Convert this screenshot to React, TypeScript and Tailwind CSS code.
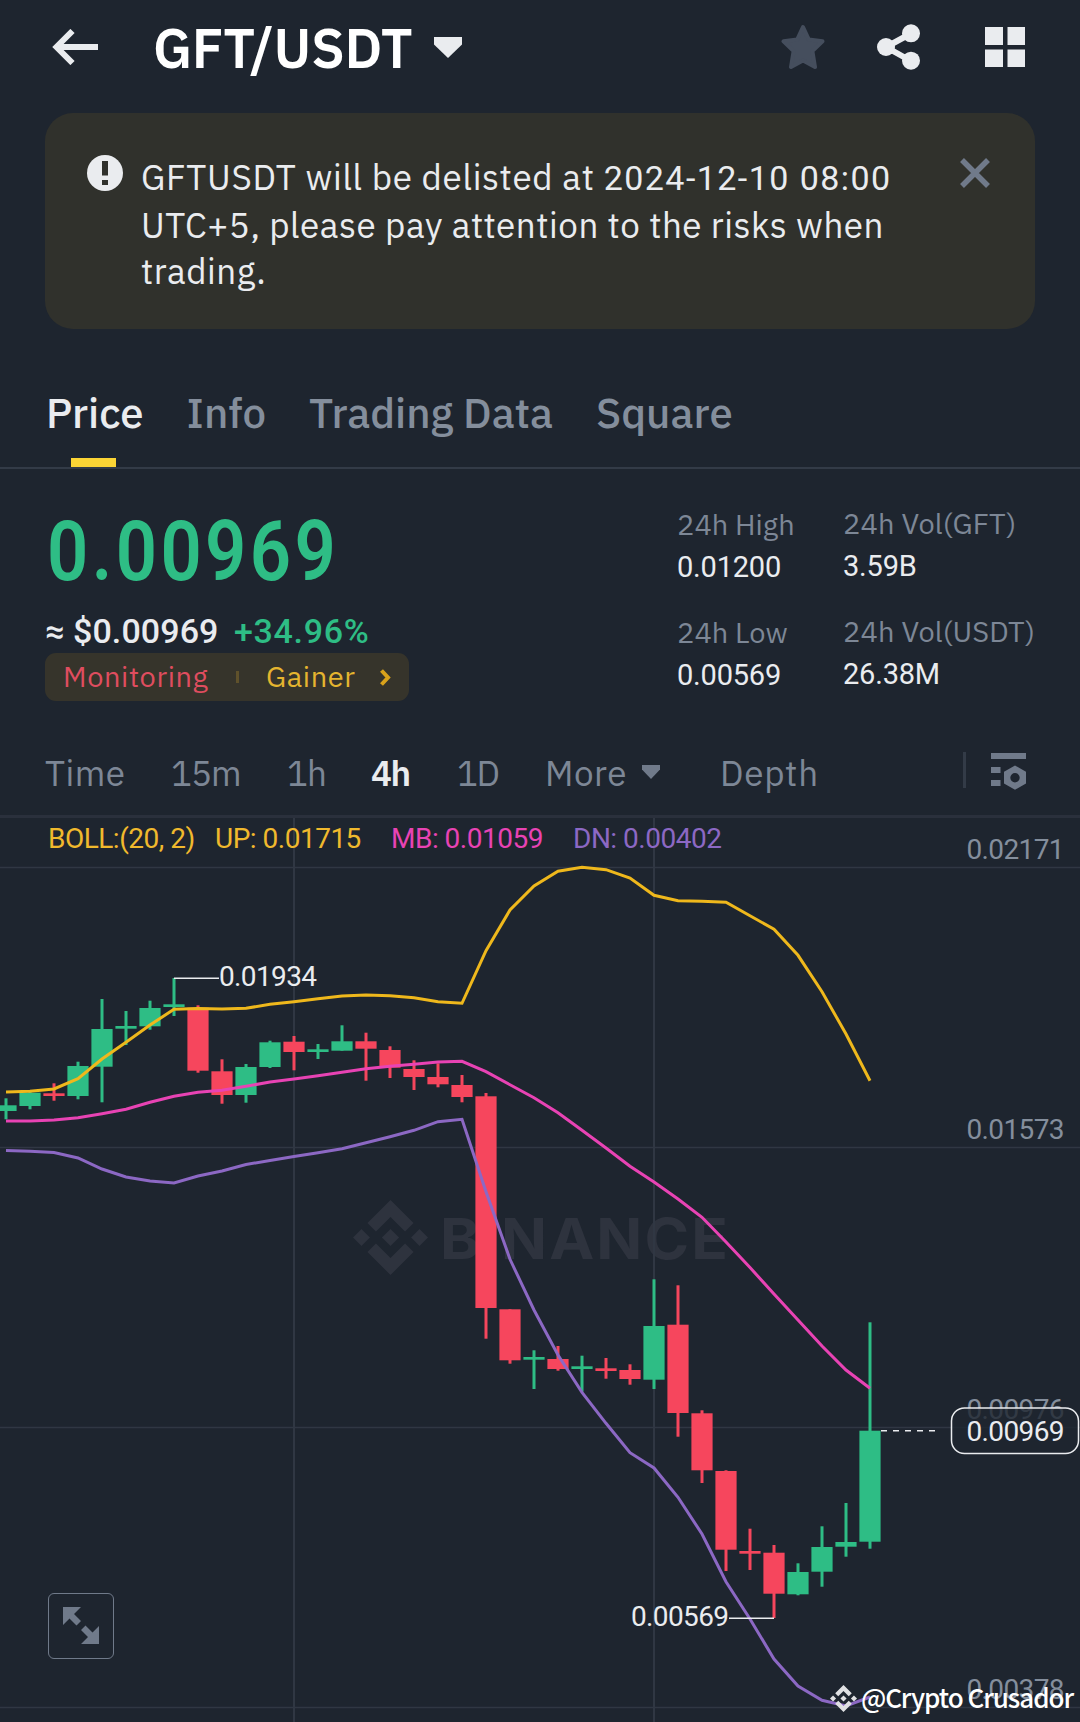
type Candle = [dir: 'up' | 'down', top: number, bottom: number, high: number, low: number];

const GREEN = '#2ebd85';
const RED = '#f6465d';
const STEP = 24;

const tabs = ['Price', 'Info', 'Trading Data', 'Square'];

const stats = [
    [
        { label: '24h High', value: '0.01200' },
        { label: '24h Low', value: '0.00569' },
    ],
    [
        { label: '24h Vol(GFT)', value: '3.59B' },
        { label: '24h Vol(USDT)', value: '26.38M' },
    ],
];

const intervals = [
    { label: 'Time', className: 'w-[126px] tracking-[0.5px]' },
    { label: '15m', className: 'w-[116px] tracking-[-1px]' },
    { label: '1h', className: 'w-[84px] tracking-[-1px]' },
    { label: '4h', className: 'w-[86px] tracking-[-1.5px]', active: true },
    { label: '1D', className: 'w-[88px] tracking-[-1.5px]' },
];

const legend = [
    { text: 'BOLL:(20, 2)', className: 'w-[167px] text-[#f0b92d]' },
    { text: 'UP: 0.01715', className: 'w-[176px] text-[#f0b92d]' },
    { text: 'MB: 0.01059', className: 'w-[182px] text-[#e843b4]' },
    { text: 'DN: 0.00402', className: 'text-[#8c68c4]' },
];

const axis = [
    { y: 867.5, label: '0.02171', labelY: 858.5 },
    { y: 1147.5, label: '0.01573', labelY: 1138.5 },
    { y: 1427.5, label: '0.00976', labelY: 1418.5 },
    { y: 1707.5, label: '0.00378', labelY: 1698.5 },
];

const candles: Candle[] = [
    ['up', 1105.3, 1111, 1098.3, 1119.3],
    ['up', 1092.7, 1106, 1091.7, 1109.3],
    ['down', 1093.3, 1096, 1083.3, 1100.7],
    ['up', 1066, 1096, 1061.7, 1099.3],
    ['up', 1029, 1066.7, 999, 1102.3],
    ['up', 1026, 1028.7, 1011, 1045],
    ['up', 1008, 1026.3, 1000.7, 1029.7],
    ['up', 1004.3, 1007, 978, 1016],
    ['down', 1007.7, 1070.7, 1005.3, 1072.7],
    ['down', 1071.3, 1095, 1059.3, 1103.7],
    ['up', 1067, 1095, 1064, 1102.7],
    ['up', 1042.3, 1067, 1040.7, 1068],
    ['down', 1041.7, 1052, 1036, 1070.3],
    ['up', 1049.3, 1052, 1044, 1059],
    ['up', 1041.3, 1050.7, 1025.3, 1050.7],
    ['down', 1041.3, 1048.7, 1032.7, 1080.7],
    ['down', 1050, 1067.7, 1046.3, 1078],
    ['down', 1069, 1077, 1060.3, 1090],
    ['down', 1077, 1084.3, 1063.3, 1087.3],
    ['down', 1085, 1097, 1075, 1102.3],
    ['down', 1096.3, 1308, 1093, 1338.7],
    ['down', 1309.3, 1360.3, 1309.3, 1363.7],
    ['up', 1357, 1359.7, 1350.3, 1389],
    ['down', 1359, 1369, 1346, 1370.7],
    ['up', 1366.3, 1369, 1355.7, 1391.7],
    ['down', 1368.3, 1371, 1358, 1378.7],
    ['down', 1370, 1379, 1364.3, 1384.7],
    ['up', 1326, 1379.7, 1279.3, 1389],
    ['down', 1324.7, 1413, 1285.3, 1436.7],
    ['down', 1413.3, 1470.3, 1410.3, 1483],
    ['down', 1471, 1549.7, 1470.3, 1571],
    ['down', 1551, 1553.7, 1528.7, 1570],
    ['down', 1552.7, 1593.7, 1545, 1618],
    ['up', 1572, 1594.3, 1563.3, 1595.3],
    ['up', 1547, 1571.7, 1526.3, 1586.7],
    ['up', 1542, 1546.7, 1503, 1556.7],
    ['up', 1430.7, 1541.7, 1322.3, 1548.7],
];

const bands = [
    {
        color: '#efb81c',
        ys: [1092, 1091.3, 1089, 1078.7, 1059, 1042.3, 1025, 1009.3, 1008.5, 1009, 1008.3, 1004.3, 1001.7, 998.7, 996, 995, 995.7, 997.7, 1001.7, 1003.3, 950.7, 910, 886, 871.3, 867.3, 869.7, 878, 895.3, 900.7, 901.3, 902.3, 915.7, 929.3, 955.3, 991.7, 1034, 1080.7],
    },
    {
        color: '#e843b4',
        ys: [1121, 1121, 1120, 1117.7, 1113.7, 1109.3, 1102.3, 1096.3, 1092.3, 1090.3, 1086.3, 1082, 1079, 1075.7, 1072.3, 1068.7, 1066.3, 1064.3, 1062, 1061.3, 1071.7, 1084.7, 1097.7, 1112.7, 1130.3, 1148, 1166.3, 1182, 1199, 1217.3, 1242, 1267.5, 1294, 1320, 1346, 1370, 1388.3],
    },
    {
        color: '#8c68c4',
        ys: [1150.5, 1151.3, 1152.5, 1158, 1169, 1177, 1181, 1183, 1176, 1171, 1164.5, 1160.5, 1156.5, 1152.7, 1148.7, 1142.7, 1136.7, 1130.3, 1121.7, 1119.3, 1191.7, 1259.3, 1310, 1355, 1392.3, 1423.3, 1452.7, 1468, 1497.3, 1534, 1581.7, 1619, 1659, 1686, 1700.3, 1706, 1697],
    },
];

const centerX = (i: number) => 6 + i * STEP;

function BinanceMark({ className }: { className?: string }) {
    return (
        <svg viewBox="0 0 126.61 126.61" fill="currentColor" className={className}>
            <path d="M38.73 53.2 63.31 28.62 87.9 53.22 102.2 38.92 63.31 0 24.42 38.9z" />
            <path d="M0 63.31 14.3 49.01 28.6 63.31 14.3 77.61z" />
            <path d="M38.73 73.41 63.31 98 87.9 73.4 102.2 87.69 63.31 126.61 24.42 87.72z" />
            <path d="M98 63.31 112.3 49 126.6 63.3 112.3 77.61z" />
            <path d="M77.82 63.3 63.31 48.79 48.79 63.3 63.31 77.81z" />
        </svg>
    );
}

function Header() {
    return (
        <header className="flex h-[94px] items-center pr-[55px] pl-[52px] text-[#eaecef]">
            <svg viewBox="0 0 46 36" className="h-9 w-[46px]" fill="none" stroke="currentColor" strokeWidth="6">
                <path d="M46 18H5M20.5 2 4.5 18l16 16" />
            </svg>
            <h1 className="ml-[55px] text-[55px] leading-none font-semibold tracking-[-0.3px] text-white">GFT/USDT</h1>
            <svg viewBox="0 0 28 21" className="ml-[22px] h-[21px] w-7" fill="currentColor">
                <path d="M0 0H28V7.5L14 21 0 7.5Z" />
            </svg>
            <div className="ml-auto flex items-center">
                <svg viewBox="0 0 44 46" className="h-[46px] w-11 text-[#454e5d]">
                    <path
                        d="M22 3l5.8 12.6 13.7 1.7L31.4 27 34 43 22 36.5 10 43 12.6 27 2.5 17.3l13.7-1.7z"
                        fill="currentColor"
                        stroke="currentColor"
                        strokeWidth="4"
                        strokeLinejoin="round"
                    />
                </svg>
                <svg viewBox="0 0 43 46" className="ml-[52px] h-[46px] w-[43px]" fill="currentColor">
                    <path d="M34 9.5 9 23l25 14" fill="none" stroke="currentColor" strokeWidth="6" />
                    <circle cx="34" cy="9.3" r="9" />
                    <circle cx="9" cy="23" r="9" />
                    <circle cx="34" cy="36.7" r="9" />
                </svg>
                <svg viewBox="0 0 40 40" className="ml-[65px] size-10" fill="currentColor">
                    <path d="M0 0h18v18H0zM22.5 0h17.5v18H22.5zM0 22.5h18V40H0zM22.5 22.5h17.5V40H22.5z" />
                </svg>
            </div>
        </header>
    );
}

function Notice() {
    return (
        <div className="mx-[45px] mt-[19px] flex h-[216px] items-start rounded-[28px] bg-[#30312c] pr-[45px] pl-[42px]">
            <svg viewBox="0 0 36 36" className="mt-[42px] size-9 shrink-0">
                <circle cx="18" cy="18" r="18" fill="#eaecef" />
                <path d="M15 6h6v14.5h-6zM15 25h6v5h-6z" fill="#30312c" />
            </svg>
            <p className="mt-[41px] ml-[18px] w-[780px] text-[35px] leading-[46.6px] tracking-[0.52px] text-[#eaecef]">
                <span className="tracking-[0.7px]">GFTUSDT will be delisted at </span>
                <span className="font-[Roboto] text-[34px] tracking-[1.45px]">2024-12-10 08:00</span>
                <br />
                UTC+5, please pay attention to the risks when
                <br />
                trading.
            </p>
            <svg viewBox="0 0 30 30" className="mt-[45px] ml-auto size-[30px] text-[#707a8a]" fill="none" stroke="currentColor" strokeWidth="5.5">
                <path d="M2 2l26 26M28 2 2 28" />
            </svg>
        </div>
    );
}

function Tabs() {
    return (
        <nav className="mt-[59px] flex h-[81px] gap-[43px] border-b-2 border-[#333b47] pl-[46px]">
            {tabs.map((tab, i) => (
                <div key={tab} className="flex flex-col items-center gap-5">
                    <span className={`text-[42px] leading-[50px] font-medium ${i === 0 ? 'text-[#eaecef]' : 'text-[#848e9c]'}`}>
                        {tab}
                    </span>
                    {i === 0 && <span className="mr-0.5 h-[9px] w-[45px] bg-[#fcd535]" />}
                </div>
            ))}
        </nav>
    );
}

function PriceSummary() {
    return (
        <section className="flex h-[260px] pl-[45px]">
            <div className="w-[632px] pt-10">
                <div className="ml-0.5 origin-left scale-x-[0.86] font-[Roboto] text-[84px] leading-[85px] font-semibold tracking-[4px] text-[#2ebd85]">0.00969</div>
                <div className="mt-[15px] flex font-[Roboto] text-[34px] leading-[44px] font-medium">
                    <span className="w-[28px] text-[#eaecef]">≈</span>
                    <span className="w-[161px] tracking-[0.1px] text-[#eaecef]">$0.00969</span>
                    <span className="tracking-[0.7px] text-[#2ebd85]">+34.96%</span>
                </div>
                <div className="flex h-12 w-[364px] items-center rounded-[11px] bg-[#36342b] pl-[18px] text-[29px] tracking-[0.6px]">
                    <span className="w-[173px] text-[#df4d5f]">Monitoring</span>
                    <span className="mr-[27px] h-3 w-[3px] bg-[#5f512b]" />
                    <span className="w-[114px] text-[#e5b52f]">Gainer</span>
                    <svg viewBox="0 0 11 17" className="h-[17px] w-[11px]" fill="none" stroke="#d9a21b" strokeWidth="4">
                        <path d="M1.5 1.5 8 8.500l-6.500 7" />
                    </svg>
                </div>
            </div>
            <div className="flex pt-[35px] text-[29px] leading-10">
                {stats.map((column, i) => (
                    <div key={i} className={i === 0 ? 'w-[166px]' : '-mt-px tracking-[0.1px]'}>
                        {column.map((item) => (
                            <div key={item.label} className="mb-[25px]">
                                <div className="whitespace-nowrap text-[#7d8796]">{item.label}</div>
                                <div className="mt-[3px] font-[Roboto] tracking-[-0.2px] text-[#eaecef]">{item.value}</div>
                            </div>
                        ))}
                    </div>
                ))}
            </div>
        </section>
    );
}

function IntervalBar() {
    return (
        <div className="flex h-[89px] items-center border-b-[3px] border-[#2a303c] pl-[45px] text-[35px] leading-none text-[#7d8796]">
            {intervals.map((item) => (
                <span key={item.label} className={`mt-0.5 ${item.className} ${item.active ? 'font-semibold text-[#eaecef]' : ''}`}>
                    {item.label}
                </span>
            ))}
            <span className="mt-0.5 tracking-[0.5px]">More</span>
            <svg viewBox="0 0 18 14" className="ml-[15px] h-[14px] w-[18px] text-[#707a8a]" fill="currentColor">
                <path d="M0 0H18V4.5L9 14 0 4.5Z" />
            </svg>
            <span className="mt-0.5 ml-[60px] tracking-[0.8px]">Depth</span>
            <span className="mb-1 ml-auto h-9 w-[3px] bg-[#333b47]" />
            <svg viewBox="0 0 35 37" className="mr-[54px] mb-0.5 ml-[25px] h-[37px] w-[35px] text-[#707a8a]" fill="currentColor">
                <path d="M0 0h35v6H0zM0 14h9.5v6H0zM0 27h9.5v6H0z" />
                <path fillRule="evenodd" d="M24 12.5l11 6.3v11.700L24 36.800l-11-6.300V18.800zM24 20a4.700 4.700 0 1 0 0 9.400 4.700 4.700 0 0 0 0-9.400z" />
            </svg>
        </div>
    );
}

function Chart() {
    return (
        <section className="relative h-[904px] font-[Roboto] text-[28px]">
            <svg viewBox="0 818 1080 904" className="block h-[904px] w-full">
                <text x="440" y="1259" fill="#2e333e" fontFamily="Inter" fontSize="57" fontWeight="700" letterSpacing="2" textLength="290" lengthAdjust="spacingAndGlyphs">
                    BINANCE
                </text>
                <g stroke="#303743" strokeWidth="2">
                    {axis.map((a) => (
                        <line key={a.label} x1="0" x2="1080" y1={a.y} y2={a.y} strokeWidth="1.5" />
                    ))}
                    <line x1="294" x2="294" y1="818" y2="1722" />
                    <line x1="654" x2="654" y1="818" y2="1722" />
                </g>
                {axis.map((a) => (
                    <text key={a.label} x="966.5" y={a.labelY} fill="#848e9c" textLength="98">
                        {a.label}
                    </text>
                ))}

                {candles.map(([dir, top, bottom, high, low], i) => (
                    <g key={i} fill={dir === 'up' ? GREEN : RED}>
                        <rect x={centerX(i) - 1.5} y={high} width="3" height={low - high} />
                        <rect x={centerX(i) - 10.6} y={top} width="21.2" height={bottom - top} />
                    </g>
                ))}
                {bands.map((band) => (
                    <polyline
                        key={band.color}
                        points={band.ys.map((y, i) => `${centerX(i)},${y}`).join(' ')}
                        fill="none"
                        stroke={band.color}
                        strokeWidth="3"
                    />
                ))}

                {/* session high and low */}
                <path d="M174 978.3H219M729 1618.3H774" stroke="#eaecef" strokeWidth="1.5" />
                <text x="219" y="985.7" fill="#eaecef" textLength="98">0.01934</text>
                <text x="631" y="1626" fill="#eaecef" textLength="98">0.00569</text>

                {/* last price */}
                <path d="M881 1430.7H935" stroke="#eaecef" strokeWidth="1.5" strokeDasharray="6 6" />
                <rect x="951.5" y="1408" width="127" height="45.5" rx="13" fill="#1e252f" fillOpacity="0.8" stroke="#eaecef" strokeWidth="1.5" />
                <text x="966.5" y="1441" fill="#eaecef" textLength="98">0.00969</text>
            </svg>
            <BinanceMark className="absolute top-[382px] left-[352.5px] h-[75px] w-[75px] text-[#2e333e]" />
            <div className="absolute top-px left-12 flex leading-10 tracking-[-0.5px]">
                {legend.map((item) => (
                    <span key={item.text} className={item.className}>{item.text}</span>
                ))}
            </div>
            <div className="absolute top-[774.5px] left-12 flex size-[66px] items-center justify-center rounded-md border-[1.5px] border-[#707a8a] text-[#707a8a]">
                <svg viewBox="0 0 36 37" className="h-[37px] w-9" fill="currentColor">
                    <path d="M0 0h18l-7 7 7 7-4.5 4.5-7-7L0 18zM36 37H18l7-7-7-7 4.5-4.5 7 7L36 19z" />
                </svg>
            </div>
            <div className="absolute right-[7px] bottom-0 flex h-12 items-center text-white">
                <BinanceMark className="h-[27px] w-[27px] text-[#e0e1e3]" />
                <span className="mb-[3px] ml-1 font-['Noto_Sans_CJK_SC'] text-[26px] leading-none font-medium whitespace-nowrap tracking-[-1.05px]">@Crypto Crusador</span>
            </div>
        </section>
    );
}

export default function App() {
    return (
        <main className="h-[1722px] w-[1080px] overflow-hidden bg-[#1e252f] font-['IBM_Plex_Sans','Noto_Sans',sans-serif]">
            <Header />
            <Notice />
            <Tabs />
            <PriceSummary />
            <IntervalBar />
            <Chart />
        </main>
    );
}
